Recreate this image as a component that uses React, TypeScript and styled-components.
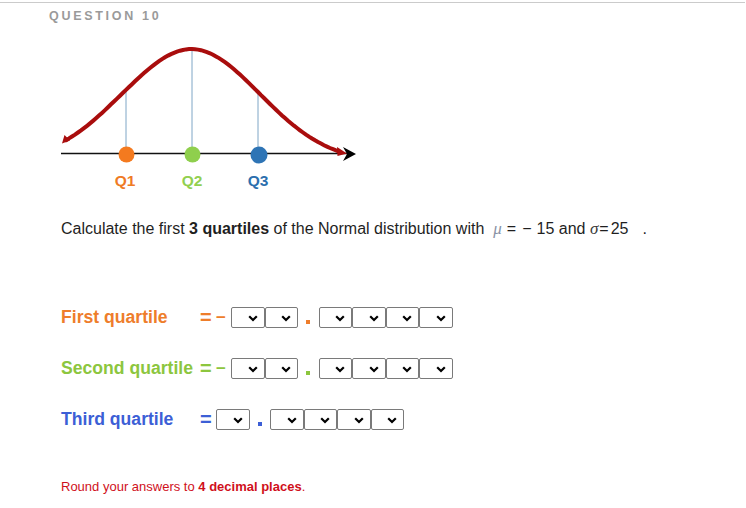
import React from "react";
import styled, { createGlobalStyle } from "styled-components";

const Global = createGlobalStyle`
  html, body { margin: 0; padding: 0; background: #fff; }
  body { padding-top: 2px; font-family: "Liberation Sans", Arial, sans-serif; }
`;

const Card = styled.div`
  border-top: 1px solid #cbcbcb;
  width: 745px;
  display: flex;
  flex-direction: column;
`;

const Header = styled.div`
  margin: 6px 0 0 49px;
  font-size: 12.5px;
  line-height: 15px;
  font-weight: bold;
  letter-spacing: 2.7px;
  color: #9a9a9a;
`;

const Chart = styled.svg`
  display: block;
  margin-top: 15px;
  margin-left: 50px;
`;

const Prompt = styled.p`
  margin: 20px 0 0 61px;
  font-size: 16px;
  line-height: 20px;
  color: #1f1f1f;
  display: flex;
  align-items: baseline;
  white-space: pre;
`;

const MathVar = styled.i<{ $light?: boolean; $l: number; $r: number }>`
  font-family: "Liberation Serif", "DejaVu Serif", serif;
  font-style: italic;
  font-size: 17px;
  color: ${(p) => (p.$light ? "#8a93a6" : "#3a3a3a")};
  margin: 0 ${(p) => p.$r}px 0 ${(p) => p.$l}px;
`;

const MathOp = styled.span<{ $l?: number; $r: number }>`
  margin: 0 ${(p) => p.$r}px 0 ${(p) => p.$l ?? 0}px;
`;

const Rows = styled.div`
  margin: 68px 0 0 61px;
  display: flex;
  flex-direction: column;
  gap: 30px;
`;

const Row = styled.div<{ $color: string }>`
  display: flex;
  align-items: center;
  height: 21px;
  color: ${(p) => p.$color};
  font-weight: bold;
  font-size: 17.6px;
`;

const Label = styled.span`
  width: 139px;
  white-space: nowrap;
`;

const Eq = styled.span`
  font-size: 20px;
  width: 16px;
`;

const Minus = styled.span`
  font-size: 17px;
  width: 15px;
`;

const Group = styled.div`
  display: flex;
`;

const Dot = styled.span<{ $color: string }>`
  width: 4px;
  height: 4px;
  background: ${(p) => p.$color};
  margin: 8px 8.5px 0 8px;
`;

const SelectBox = styled.div`
  position: relative;
  width: 33.5px;
  height: 21px;
  box-sizing: border-box;
  border: 1px solid #7a7a7a;
  border-radius: 2px;
  background: #fff;
`;

const NativeSelect = styled.select`
  appearance: none;
  -webkit-appearance: none;
  border: none;
  background: transparent;
  width: 100%;
  height: 100%;
  padding: 0;
  margin: 0;
  outline: none;
  color: transparent;
`;

const Chevron = styled.svg`
  position: absolute;
  right: 6px;
  top: 6.5px;
  pointer-events: none;
`;

const Footer = styled.p`
  margin: 49px 0 0 61px;
  font-size: 13px;
  line-height: 16px;
  color: #d0101b;
`;

function Dropdown() {
  return (
    <SelectBox>
      <NativeSelect aria-label="digit">
        <option value=""></option>
        {Array.from({ length: 10 }, (_, i) => (
          <option key={i} value={i}>
            {i}
          </option>
        ))}
      </NativeSelect>
      <Chevron width="10" height="7" viewBox="0 0 10 7">
        <path d="M1.2 1.2 L5 5 L8.8 1.2" fill="none" stroke="#000" strokeWidth="2.2" />
      </Chevron>
    </SelectBox>
  );
}

function Digits({ n }: { n: number }) {
  return (
    <Group>
      {Array.from({ length: n }, (_, i) => (
        <Dropdown key={i} />
      ))}
    </Group>
  );
}

const gy = (x: number) => {
  const base = 156 + Math.max(0, x - 192) * 0.032 + Math.max(0, 110 - x) * 0.05;
  return base - 108 * Math.exp(-((x - 192) ** 2) / (2 * 4571));
};

function curvePath() {
  const pts: string[] = [];
  for (let x = 66; x <= 340; x += 3) {
    pts.push(`${x.toFixed(1)},${gy(x).toFixed(1)}`);
  }
  return "M" + pts.join(" L");
}

function NormalChart() {
  return (
    <Chart width="320" height="160" viewBox="50 38 320 160">
      <line x1="61" y1="152.5" x2="350" y2="152.5" stroke="#111" strokeWidth="1.5" />
      <polygon points="356,153 343,146 347,153 343,160" fill="#000" />
      <line x1="126" y1={gy(126)} x2="126" y2="152" stroke="#7fa6c6" strokeWidth="1" />
      <line x1="192" y1={gy(192)} x2="192" y2="152" stroke="#7fa6c6" strokeWidth="1" />
      <line x1="258" y1={gy(258)} x2="258" y2="152" stroke="#7fa6c6" strokeWidth="1" />
      <path d={curvePath()} fill="none" stroke="#a90d0d" strokeWidth="4" strokeLinecap="round" />
      <polygon points="62,142.5 64.5,134 70,139.5" fill="#a90d0d" />
      <polygon points="347,152.5 337,146 337.5,155" fill="#a90d0d" />
      <circle cx="126.5" cy="153.5" r="8" fill="#f47a1f" />
      <circle cx="192.5" cy="153.5" r="8" fill="#8fcf4d" />
      <circle cx="259" cy="154" r="8.5" fill="#2e74b5" />
      <text x="125" y="185" textAnchor="middle" fill="#ef7b25" fontFamily="Liberation Sans, Arial, sans-serif" fontWeight="bold" fontSize="15.5">
        Q1
      </text>
      <text x="192" y="185" textAnchor="middle" fill="#92d050" fontFamily="Liberation Sans, Arial, sans-serif" fontWeight="bold" fontSize="15.5">
        Q2
      </text>
      <text x="258" y="185" textAnchor="middle" fill="#2c6fae" fontFamily="Liberation Sans, Arial, sans-serif" fontWeight="bold" fontSize="15.5">
        Q3
      </text>
    </Chart>
  );
}

const ORANGE = "#ee7d2b";
const GREEN = "#8cc63e";
const BLUE = "#3c5fd6";

export default function App() {
  return (
    <>
      <Global />
      <Card>
        <Header>QUESTION 10</Header>
        <NormalChart />
        <Prompt>
          <span>Calculate the first </span>
          <b>3 quartiles</b>
          <span> of the Normal distribution with</span>
          <MathVar $light $l={9} $r={5}>
            μ
          </MathVar>
          <MathOp $r={6}>=</MathOp>
          <MathOp $r={5}>−</MathOp>
          <span>15 and </span>
          <MathVar $l={0} $r={1}>
            σ
          </MathVar>
          <MathOp $r={2}>=</MathOp>
          <span>25</span>
          <MathOp $l={14} $r={0}>
            .
          </MathOp>
        </Prompt>
        <Rows>
          <Row $color={ORANGE}>
            <Label>First quartile</Label>
            <Eq>=</Eq>
            <Minus>−</Minus>
            <Digits n={2} />
            <Dot $color={ORANGE} />
            <Digits n={4} />
          </Row>
          <Row $color={GREEN}>
            <Label>Second quartile</Label>
            <Eq>=</Eq>
            <Minus>−</Minus>
            <Digits n={2} />
            <Dot $color={GREEN} />
            <Digits n={4} />
          </Row>
          <Row $color={BLUE}>
            <Label>Third quartile</Label>
            <Eq>=</Eq>
            <Digits n={1} />
            <Dot $color={BLUE} />
            <Digits n={4} />
          </Row>
        </Rows>
        <Footer>
          Round your answers to <b>4 decimal places</b>.
        </Footer>
      </Card>
    </>
  );
}
